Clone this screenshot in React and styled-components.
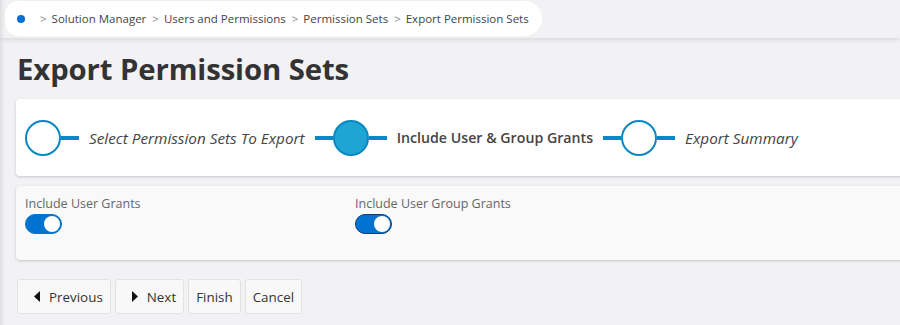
import React, { useState } from "react";
import styled, { createGlobalStyle } from "styled-components";

const GlobalStyle = createGlobalStyle`
  html, body {
    margin: 0;
    padding: 0;
    background: #f2f1f4;
    font-family: "Open Sans", "Liberation Sans", sans-serif;
    color: #333;
  }
  * { box-sizing: border-box; }
`;

const Page = styled.div`
  width: 900px;
  height: 325px;
  overflow: hidden;
  position: relative;
  background: #f2f1f4;
  box-shadow: inset 5px 0 5px -4px rgba(0, 0, 0, 0.12);
`;

const TopBar = styled.div`
  height: 38px;
  padding: 1px 0 0 5px;
  box-shadow: 0 3px 4px -1px rgba(0, 0, 0, 0.1);
`;

const Crumbs = styled.nav`
  display: inline-flex;
  align-items: center;
  height: 35px;
  padding: 0 13px 0 12px;
  background: #fff;
  border-radius: 0 18px 18px 0;
  border-top-left-radius: 14px;
  border-bottom-left-radius: 14px;
  font-size: 11.5px;
  color: #444;
`;

const HomeDot = styled.span`
  width: 8px;
  height: 8px;
  border-radius: 50%;
  background: #0071d3;
  margin-right: 9px;
`;

const Sep = styled.span`
  color: #888;
  margin: 0 5px 0 6px;
  font-size: 11.5px;
`;

const Content = styled.div`
  padding: 0 0 0 16px;
`;

const Title = styled.h1`
  margin: 12px 0 0 1px;
  font-size: 29.3px;
  font-weight: 700;
  color: #333;
  line-height: 38px;
  letter-spacing: -0.1px;
`;

const Card = styled.div`
  margin-top: ${(p) => p.top || "0px"};
  width: 900px;
  height: ${(p) => p.h};
  background: ${(p) => p.bg || "#fff"};
  border-radius: 4px;
  box-shadow: 0 1px 3px rgba(0, 0, 0, 0.18);
`;

const Stepper = styled.div`
  display: flex;
  align-items: center;
  height: 100%;
  padding-left: 9px;
`;

const Step = styled.div`
  display: flex;
  align-items: center;
  margin-right: 10px;
`;

const Line = styled.span`
  width: 18px;
  height: 4px;
  background: #0a88c2;
`;

const Circle = styled.span`
  width: 36px;
  height: 36px;
  border-radius: 50%;
  border: 2px solid #0a88c2;
  background: ${(p) => (p.active ? "#1ea5d3" : "#fff")};
`;

const StepLabel = styled.span`
  margin-left: 10px;
  font-size: ${(p) => (p.active ? "14.2px" : "15.3px")};
  font-style: ${(p) => (p.active ? "normal" : "italic")};
  font-weight: ${(p) => (p.active ? 600 : 400)};
  color: #444;
`;

const Options = styled.div`
  display: grid;
  grid-template-columns: 330px 300px;
  padding: 9px 0 0 9px;
`;

const Field = styled.div`
  display: flex;
  flex-direction: column;
  align-items: flex-start;
`;

const FieldLabel = styled.label`
  font-size: 12.5px;
  color: #666;
  line-height: 17px;
`;

const Toggle = styled.button`
  margin-top: 2px;
  width: 37px;
  height: 20px;
  border-radius: 10px;
  border: 1px solid ${(p) => (p.focused ? "#173b6a" : "#0073d0")};
  background: #0073d0;
  padding: 0;
  display: flex;
  align-items: center;
  justify-content: ${(p) => (p.on ? "flex-end" : "flex-start")};
  cursor: pointer;
`;

const Knob = styled.span`
  width: 16px;
  height: 16px;
  border-radius: 50%;
  background: #fff;
  margin: 0 1px;
`;

const Actions = styled.div`
  display: flex;
  gap: 4px;
  margin: 19px 0 0 1px;
`;

const Button = styled.button`
  height: 35px;
  padding: 0 ${(p) => p.pr || "7px"} 0 ${(p) => p.pl || "7px"};
  display: flex;
  align-items: center;
  gap: 9px;
  background: #f8f8f8;
  border: 1px solid #e2e2e4;
  border-radius: 3px;
  font-family: inherit;
  font-size: 13.4px;
  color: #333;
  cursor: pointer;
`;

const Caret = ({ dir }) => (
  <svg width="6" height="11" viewBox="0 0 6 11">
    {dir === "left" ? (
      <path d="M6 0 L0 5.5 L6 11 Z" fill="#111" />
    ) : (
      <path d="M0 0 L6 5.5 L0 11 Z" fill="#111" />
    )}
  </svg>
);

const crumbs = [
  "Solution Manager",
  "Users and Permissions",
  "Permission Sets",
  "Export Permission Sets",
];

const steps = [
  { label: "Select Permission Sets To Export" },
  { label: "Include User & Group Grants", active: true },
  { label: "Export Summary" },
];

export default function App() {
  const [userGrants, setUserGrants] = useState(true);
  const [groupGrants, setGroupGrants] = useState(true);

  return (
    <Page>
      <GlobalStyle />
      <TopBar>
        <Crumbs>
          <HomeDot />
          {crumbs.map((c) => (
            <React.Fragment key={c}>
              <Sep>&gt;</Sep>
              <span>{c}</span>
            </React.Fragment>
          ))}
        </Crumbs>
      </TopBar>
      <Content>
        <Title>Export Permission Sets</Title>
        <Card top="11px" h="77px">
          <Stepper>
            {steps.map((s, i) => (
              <Step key={s.label}>
                {i > 0 && <Line />}
                <Circle active={s.active} />
                <Line />
                <StepLabel active={s.active}>{s.label}</StepLabel>
              </Step>
            ))}
          </Stepper>
        </Card>
        <Card top="10px" h="74px" bg="#f9f9f9">
          <Options>
            <Field>
              <FieldLabel>Include User Grants</FieldLabel>
              <Toggle on={userGrants} onClick={() => setUserGrants(!userGrants)}>
                <Knob />
              </Toggle>
            </Field>
            <Field>
              <FieldLabel>Include User Group Grants</FieldLabel>
              <Toggle
                focused
                on={groupGrants}
                onClick={() => setGroupGrants(!groupGrants)}
              >
                <Knob />
              </Toggle>
            </Field>
          </Options>
        </Card>
        <Actions>
          <Button pl="16px" pr="7px">
            <Caret dir="left" />
            Previous
          </Button>
          <Button pl="16px" pr="7px">
            <Caret dir="right" />
            Next
          </Button>
          <Button>Finish</Button>
          <Button>Cancel</Button>
        </Actions>
      </Content>
    </Page>
  );
}
